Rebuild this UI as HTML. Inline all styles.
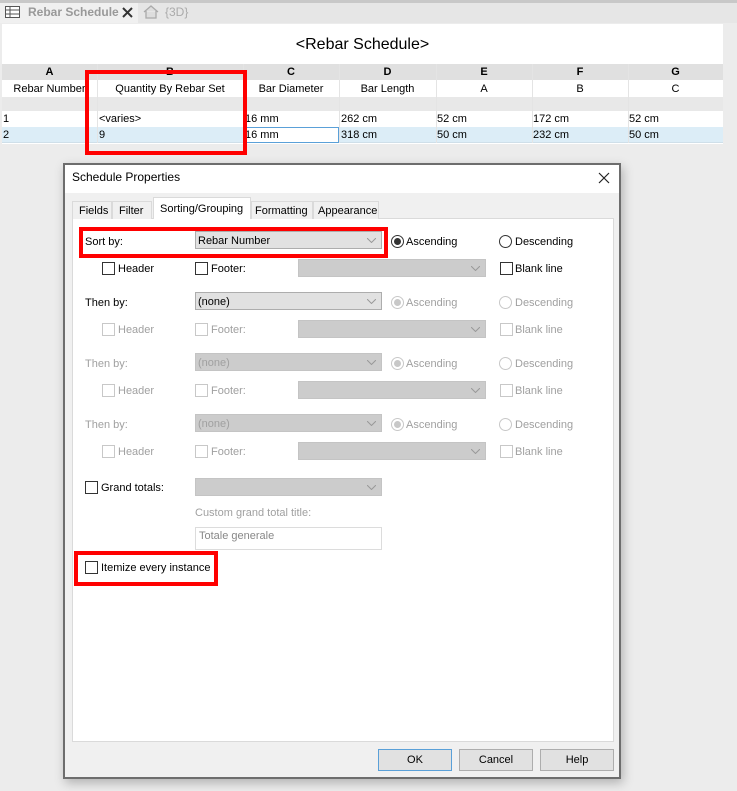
<!DOCTYPE html>
<html><head><style>
*{margin:0;padding:0;box-sizing:border-box}
body{width:737px;height:791px;background:#ececec;position:relative;overflow:hidden;font-family:"Liberation Sans",Arial,sans-serif;font-size:11px;color:#000}
.a{position:absolute}
.t{position:absolute;white-space:nowrap;font-size:11px;line-height:13px}
.g{color:#a0a0a0}
.cb{position:absolute;width:13px;height:13px;border:1px solid #333;background:#fff}
.cb.d{border-color:#c8c8c8}
.rb{position:absolute;width:13px;height:13px;border:1px solid #333;border-radius:50%;background:#fff}
.rb.d{border-color:#c8c8c8}
.rb.on::after{content:"";position:absolute;left:2px;top:2px;width:7px;height:7px;border-radius:50%;background:#333}
.rb.d.on::after{background:#c8c8c8}
.dd{position:absolute;height:18px;background:#cccccc;border:1px solid #c4c4c4}
.dd.e{background:#e1e1e1;border-color:#adadad}
.dd span{position:absolute;left:2px;top:3px;font-size:11px}
.dd svg{position:absolute;right:5px;top:6px}
.red{position:absolute;border:4px solid #f00}
.cell{position:absolute;font-size:11px;line-height:16px;white-space:nowrap}
.btn{position:absolute;height:22px;background:#e1e1e1;border:1px solid #adadad;text-align:center;line-height:20px;font-size:11px}
.vl{position:absolute;top:64px;width:1px;height:79px;background:#e4e4e4}
</style></head><body>
<div class="a" style="left:0;top:0;width:737px;height:3px;background:#c8c8c8"></div>
<div class="a" style="left:0;top:3px;width:737px;height:20px;background:#e6e6e6"></div>
<div class="a" style="left:0;top:3px;width:138px;height:20px;background:#f0f0f0"></div>
<svg class="a" style="left:5px;top:6px" width="16" height="13"><rect x="0.5" y="0.5" width="14" height="11" fill="#fff" stroke="#555"/><path d="M0 4h15M0 8h15M5 0v12" stroke="#555"/></svg>
<div class="t" style="left:28px;top:6px;font-size:12px;font-weight:bold;color:#999">Rebar Schedule</div>
<svg class="a" style="left:122px;top:7px" width="11" height="11"><path d="M1 1L10 10M10 1L1 10" stroke="#333" stroke-width="2"/></svg>
<svg class="a" style="left:143px;top:4px" width="16" height="15"><path d="M1 8L8 2l7 6M3 7v7h10V7" fill="#ddd" stroke="#aaa" stroke-width="1.3"/></svg>
<div class="t" style="left:165px;top:6px;font-size:12px;color:#aaa">{3D}</div>
<div class="a" style="left:2px;top:24px;width:721px;height:120px;background:#fff"></div>
<div class="t" style="left:2px;width:721px;text-align:center;top:36px;font-size:16px;line-height:18px">&lt;Rebar Schedule&gt;</div>
<div class="a" style="left:2px;top:64px;width:721px;height:16px;background:#e0e0e0"></div>
<div class="a" style="left:2px;top:97px;width:721px;height:14px;background:#e8e8e8"></div>
<div class="a" style="left:2px;top:127px;width:721px;height:16px;background:#dcedf7;border-bottom:1px solid #cfdfe9"></div>
<div class="vl" style="left:97px"></div><div class="vl" style="left:243px"></div><div class="vl" style="left:339px"></div><div class="vl" style="left:436px"></div><div class="vl" style="left:532px"></div><div class="vl" style="left:628px"></div>
<div class="a" style="left:243px;top:127px;width:96px;height:16px;background:#fff;border:1px solid #5aa0d8"></div>
<div class="cell" style="left:2px;width:95px;text-align:center;top:64px;font-weight:bold">A</div>
<div class="cell" style="left:97px;width:146px;text-align:center;top:64px;font-weight:bold">B</div>
<div class="cell" style="left:243px;width:96px;text-align:center;top:64px;font-weight:bold">C</div>
<div class="cell" style="left:339px;width:97px;text-align:center;top:64px;font-weight:bold">D</div>
<div class="cell" style="left:436px;width:96px;text-align:center;top:64px;font-weight:bold">E</div>
<div class="cell" style="left:532px;width:96px;text-align:center;top:64px;font-weight:bold">F</div>
<div class="cell" style="left:628px;width:95px;text-align:center;top:64px;font-weight:bold">G</div>
<div class="cell" style="left:2px;width:95px;text-align:center;top:81px">Rebar Number</div>
<div class="cell" style="left:97px;width:146px;text-align:center;top:81px">Quantity By Rebar Set</div>
<div class="cell" style="left:243px;width:96px;text-align:center;top:81px">Bar Diameter</div>
<div class="cell" style="left:339px;width:97px;text-align:center;top:81px">Bar Length</div>
<div class="cell" style="left:436px;width:96px;text-align:center;top:81px">A</div>
<div class="cell" style="left:532px;width:96px;text-align:center;top:81px">B</div>
<div class="cell" style="left:628px;width:95px;text-align:center;top:81px">C</div>
<div class="cell" style="left:3px;top:111px">1</div><div class="cell" style="left:99px;top:111px">&lt;varies&gt;</div><div class="cell" style="left:245px;top:111px">16 mm</div><div class="cell" style="left:341px;top:111px">262 cm</div><div class="cell" style="left:437px;top:111px">52 cm</div><div class="cell" style="left:533px;top:111px">172 cm</div><div class="cell" style="left:629px;top:111px">52 cm</div>
<div class="cell" style="left:3px;top:127px">2</div><div class="cell" style="left:99px;top:127px">9</div><div class="cell" style="left:245px;top:127px">16 mm</div><div class="cell" style="left:341px;top:127px">318 cm</div><div class="cell" style="left:437px;top:127px">50 cm</div><div class="cell" style="left:533px;top:127px">232 cm</div><div class="cell" style="left:629px;top:127px">50 cm</div>
<div class="red" style="left:85px;top:70px;width:162px;height:85px"></div>
<div class="a" style="left:63px;top:163px;width:558px;height:616px;background:#f0f0f0;border:2px solid #6d6d6d;box-shadow:2px 4px 10px rgba(0,0,0,.25)"></div>
<div class="a" style="left:65px;top:165px;width:554px;height:28px;background:#fff"></div>
<div class="t" style="left:72px;top:171px;font-size:12px">Schedule Properties</div>
<svg class="a" style="left:598px;top:172px" width="12" height="12"><path d="M1 1L11 11M11 1L1 11" stroke="#222" stroke-width="1.2"/></svg>
<div class="a" style="left:72px;top:218px;width:542px;height:524px;background:#fff;border:1px solid #dadada"></div>
<div class="a" style="left:72px;top:201px;width:40px;height:18px;background:#f0f0f0;border:1px solid #dadada;border-bottom:none"></div>
<div class="t" style="left:79px;top:205px">Fields</div>
<div class="a" style="left:112px;top:201px;width:40px;height:18px;background:#f0f0f0;border:1px solid #dadada;border-bottom:none"></div>
<div class="t" style="left:119px;top:205px">Filter</div>
<div class="a" style="left:153px;top:197px;width:98px;height:22px;background:#fff;border:1px solid #dadada;border-bottom:none"></div>
<div class="t" style="left:160px;top:203px">Sorting/Grouping</div>
<div class="a" style="left:251px;top:201px;width:62px;height:18px;background:#f0f0f0;border:1px solid #dadada;border-bottom:none"></div>
<div class="t" style="left:255px;top:205px">Formatting</div>
<div class="a" style="left:313px;top:201px;width:66px;height:18px;background:#f0f0f0;border:1px solid #dadada;border-bottom:none"></div>
<div class="t" style="left:318px;top:205px">Appearance</div>

<div class="t" style="left:85px;top:236px">Sort by:</div>
<div class="dd e" style="left:195px;top:231px;width:187px"><span>Rebar Number</span><svg width="9" height="5"><path d="M0 0l4.5 4.5L9 0" fill="none" stroke="#999"/></svg></div>
<div class="rb on" style="left:391px;top:235px"></div><div class="t" style="left:406px;top:236px">Ascending</div>
<div class="rb" style="left:499px;top:235px"></div><div class="t" style="left:515px;top:236px">Descending</div>
<div class="cb" style="left:102px;top:262px"></div><div class="t" style="left:118px;top:263px">Header</div>
<div class="cb" style="left:195px;top:262px"></div><div class="t" style="left:211px;top:263px">Footer:</div>
<div class="dd" style="left:298px;top:259px;width:188px"><svg width="9" height="5"><path d="M0 0l4.5 4.5L9 0" fill="none" stroke="#999"/></svg></div>
<div class="cb" style="left:500px;top:262px"></div><div class="t" style="left:515px;top:263px">Blank line</div>

<div class="t" style="left:85px;top:297px">Then by:</div>
<div class="dd e" style="left:195px;top:292px;width:187px"><span>(none)</span><svg width="9" height="5"><path d="M0 0l4.5 4.5L9 0" fill="none" stroke="#999"/></svg></div>
<div class="rb d on" style="left:391px;top:296px"></div><div class="t g" style="left:406px;top:297px">Ascending</div>
<div class="rb d" style="left:499px;top:296px"></div><div class="t g" style="left:515px;top:297px">Descending</div>
<div class="cb d" style="left:102px;top:323px"></div><div class="t g" style="left:118px;top:324px">Header</div>
<div class="cb d" style="left:195px;top:323px"></div><div class="t g" style="left:211px;top:324px">Footer:</div>
<div class="dd" style="left:298px;top:320px;width:188px"><svg width="9" height="5"><path d="M0 0l4.5 4.5L9 0" fill="none" stroke="#999"/></svg></div>
<div class="cb d" style="left:500px;top:323px"></div><div class="t g" style="left:515px;top:324px">Blank line</div>

<div class="t g" style="left:85px;top:358px">Then by:</div>
<div class="dd" style="left:195px;top:353px;width:187px"><span class="g">(none)</span><svg width="9" height="5"><path d="M0 0l4.5 4.5L9 0" fill="none" stroke="#999"/></svg></div>
<div class="rb d on" style="left:391px;top:357px"></div><div class="t g" style="left:406px;top:358px">Ascending</div>
<div class="rb d" style="left:499px;top:357px"></div><div class="t g" style="left:515px;top:358px">Descending</div>
<div class="cb d" style="left:102px;top:384px"></div><div class="t g" style="left:118px;top:385px">Header</div>
<div class="cb d" style="left:195px;top:384px"></div><div class="t g" style="left:211px;top:385px">Footer:</div>
<div class="dd" style="left:298px;top:381px;width:188px"><svg width="9" height="5"><path d="M0 0l4.5 4.5L9 0" fill="none" stroke="#999"/></svg></div>
<div class="cb d" style="left:500px;top:384px"></div><div class="t g" style="left:515px;top:385px">Blank line</div>

<div class="t g" style="left:85px;top:419px">Then by:</div>
<div class="dd" style="left:195px;top:414px;width:187px"><span class="g">(none)</span><svg width="9" height="5"><path d="M0 0l4.5 4.5L9 0" fill="none" stroke="#999"/></svg></div>
<div class="rb d on" style="left:391px;top:418px"></div><div class="t g" style="left:406px;top:419px">Ascending</div>
<div class="rb d" style="left:499px;top:418px"></div><div class="t g" style="left:515px;top:419px">Descending</div>
<div class="cb d" style="left:102px;top:445px"></div><div class="t g" style="left:118px;top:446px">Header</div>
<div class="cb d" style="left:195px;top:445px"></div><div class="t g" style="left:211px;top:446px">Footer:</div>
<div class="dd" style="left:298px;top:442px;width:188px"><svg width="9" height="5"><path d="M0 0l4.5 4.5L9 0" fill="none" stroke="#999"/></svg></div>
<div class="cb d" style="left:500px;top:445px"></div><div class="t g" style="left:515px;top:446px">Blank line</div>

<div class="cb" style="left:85px;top:481px"></div><div class="t" style="left:101px;top:482px">Grand totals:</div>
<div class="dd" style="left:195px;top:478px;width:187px"><svg width="9" height="5"><path d="M0 0l4.5 4.5L9 0" fill="none" stroke="#999"/></svg></div>
<div class="t g" style="left:195px;top:507px">Custom grand total title:</div>
<div class="a" style="left:195px;top:527px;width:187px;height:23px;border:1px solid #dcdcdc;background:#fff"></div>
<div class="t" style="left:199px;top:530px;color:#888">Totale generale</div>
<div class="cb" style="left:85px;top:561px"></div><div class="t" style="left:101px;top:562px">Itemize every instance</div>
<div class="red" style="left:79px;top:227px;width:309px;height:31px"></div>
<div class="red" style="left:74px;top:551px;width:144px;height:35px"></div>
<div class="btn" style="left:378px;top:749px;width:74px;border-color:#5aa0d8">OK</div>
<div class="btn" style="left:459px;top:749px;width:74px">Cancel</div>
<div class="btn" style="left:540px;top:749px;width:74px">Help</div>
</body></html>
